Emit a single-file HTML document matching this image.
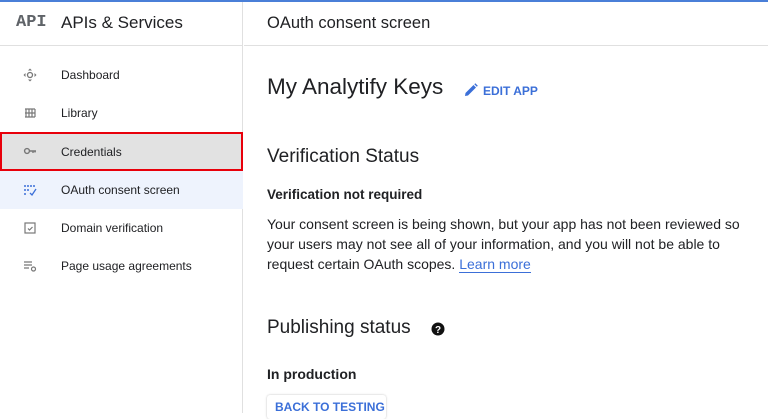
<!DOCTYPE html>
<html><head><style>
*{margin:0;padding:0;box-sizing:border-box}
body{width:768px;height:413px;overflow:hidden;background:#fff;font-family:"Liberation Sans",sans-serif;color:#202124;position:relative}
.topbar{position:absolute;left:0;top:0;width:768px;height:2px;background:#4a7fd8}
.side{position:absolute;left:0;top:2px;width:243px;height:411px;border-right:1px solid #e0e0e0}
.hdr{position:absolute;top:2px;height:44px;border-bottom:1px solid #e0e0e0}
.t{position:absolute;white-space:nowrap}
.item{position:absolute;left:0;width:243px;height:38px;font-size:12px;color:#202124}
.item span.l{position:absolute;left:61px;top:12px}
.ic{position:absolute;left:23px;top:12px;width:14px;height:14px}
p.body{font-size:14px;line-height:20px;color:#202124}
</style></head><body>
<div class="topbar"></div>
<div class="hdr" style="left:0;width:243px"></div>
<div class="hdr" style="left:244px;width:524px"></div>
<div class="side"></div>
<div class="t" style="left:16px;top:13px;font-family:'Liberation Mono',monospace;font-size:17px;color:#5f6368;font-weight:bold">API</div>
<div class="t" style="left:61px;top:13px;font-size:17px;color:#202124">APIs &amp; Services</div>
<div class="t" style="left:267px;top:14px;font-size:16.5px">OAuth consent screen</div>

<div class="item" style="top:56px"><svg class="ic" viewBox="0 0 14 14" fill="#777"><circle cx="7" cy="7" r="2.5" fill="none" stroke="#777" stroke-width="1.3"/><path d="M5 2.5L7 0.5 9 2.5Z M5 11.5L7 13.5 9 11.5Z M2.5 5L0.5 7 2.5 9Z M11.5 5L13.5 7 11.5 9Z"/></svg><span class="l">Dashboard</span></div>
<div class="item" style="top:94px"><svg class="ic" viewBox="0 0 14 14" stroke="#777" stroke-width="1.2"><path d="M2 3h10M2 7h10M2 11h10M3 3v8M6 3v8M9 3v8M12 3v8"/></svg><span class="l">Library</span></div>
<div class="item" style="top:132px;background:#e2e2e2;border:2px solid #e8000b;height:39px"><svg class="ic" viewBox="0 0 14 14" style="left:21px;top:10px" fill="none" stroke="#777" stroke-width="1.4"><circle cx="4" cy="7" r="2.4"/><path d="M6.5 7h6.5M10 7v2M12 7v1.5"/></svg><span class="l" style="left:59px;top:11px">Credentials</span></div>
<div class="item" style="top:171px;background:#eef3fd"><svg class="ic" viewBox="0 0 14 14" fill="#3b6fd8"><circle cx="2" cy="3" r="1"/><circle cx="5" cy="3" r="1"/><circle cx="8" cy="3" r="1"/><circle cx="11" cy="3" r="1"/><circle cx="2" cy="7" r="1"/><circle cx="5" cy="7" r="1"/><circle cx="2" cy="11" r="1"/><path d="M7 10l2 2 4-6" stroke="#3b6fd8" stroke-width="1.3" fill="none"/></svg><span class="l">OAuth consent screen</span></div>
<div class="item" style="top:209px"><svg class="ic" viewBox="0 0 14 14" fill="none" stroke="#777" stroke-width="1.2"><rect x="2" y="2" width="10" height="10"/><path d="M5 7.5l1.5 1.5 3-3"/></svg><span class="l">Domain verification</span></div>
<div class="item" style="top:247px"><svg class="ic" viewBox="0 0 14 14" fill="none" stroke="#777" stroke-width="1.2"><path d="M1 3h8M1 6h8M1 9h5"/><circle cx="10.5" cy="10" r="2"/></svg><span class="l">Page usage agreements</span></div>

<div class="t" style="left:267px;top:74px;font-size:22.5px">My Analytify Keys</div>
<svg class="t" style="left:464px;top:83px" width="14" height="14" viewBox="0 0 14 14"><path d="M1 13l0.5-3 8-8 2.5 2.5-8 8z M10.3 1.3l1-1 2.5 2.5-1 1z" fill="#3b6fd8"/></svg>
<div class="t" style="left:483px;top:84px;font-size:12px;font-weight:bold;color:#3b6fd8">EDIT APP</div>

<div class="t" style="left:267px;top:146px;font-size:19px">Verification Status</div>
<div class="t" style="left:267px;top:187px;font-size:13.5px;font-weight:bold">Verification not required</div>
<p class="body t" style="left:267px;top:214px">Your consent screen is being shown, but your app has not been reviewed so<br>your users may not see all of your information, and you will not be able to<br>request certain OAuth scopes. <span style="color:#3b6fd8;border-bottom:1px solid #3b6fd8">Learn more</span></p>

<div class="t" style="left:267px;top:317px;font-size:19px">Publishing status</div>
<svg class="t" style="left:431px;top:322px" width="14" height="14" viewBox="0 0 14 14"><circle cx="7" cy="7" r="6.5" fill="#111"/><text x="7" y="11" font-size="10" font-weight="bold" fill="#fff" text-anchor="middle" font-family="Liberation Sans">?</text></svg>
<div class="t" style="left:267px;top:366px;font-size:14px;font-weight:bold">In production</div>
<div class="t" style="left:267px;top:395px;width:119px;height:24px;border-radius:3px;box-shadow:0 0 2px rgba(0,0,0,.25);font-size:12px;font-weight:bold;color:#3b6fd8;padding:5px 0 0 8px">BACK TO TESTING</div>
</body></html>
